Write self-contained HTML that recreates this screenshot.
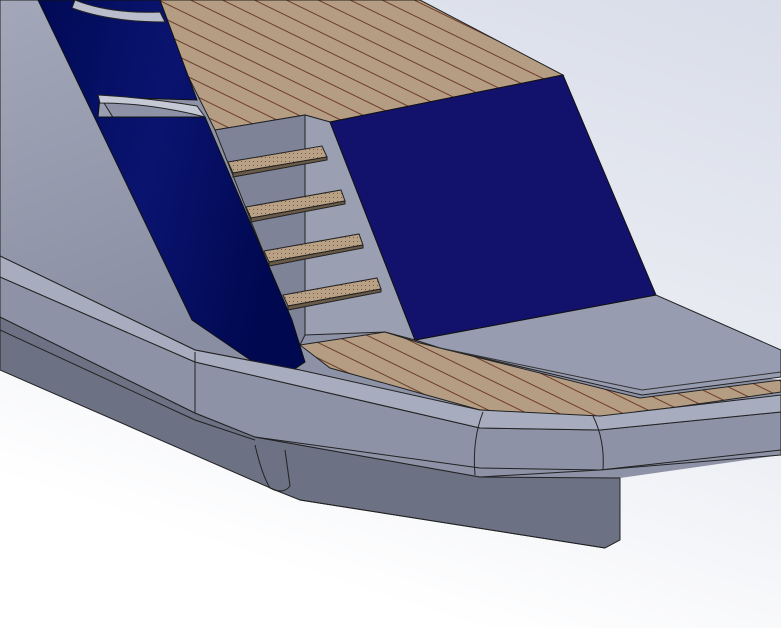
<!DOCTYPE html>
<html><head><meta charset="utf-8"><style>html,body{margin:0;padding:0;width:781px;height:628px;overflow:hidden;background:#fff}</style></head>
<body>
<svg width="781" height="628" viewBox="0 0 781 628" xmlns="http://www.w3.org/2000/svg">
<defs>
<linearGradient id="bg" x1="1" y1="0" x2="0.6" y2="1">
<stop offset="0" stop-color="#d9dde9"/><stop offset="0.6" stop-color="#eceef4"/><stop offset="1" stop-color="#ffffff"/>
</linearGradient>
<linearGradient id="side" x1="0" y1="0" x2="0.3" y2="1">
<stop offset="0" stop-color="#a2a7b9"/><stop offset="1" stop-color="#898ea2"/>
</linearGradient>
<pattern id="wood" patternUnits="userSpaceOnUse" width="14" height="14" patternTransform="rotate(26)">
<rect width="14" height="14" fill="#b49d83"/><rect y="0" width="14" height="1" fill="#6e3c2a"/>
</pattern>
<pattern id="tread" patternUnits="userSpaceOnUse" width="4" height="4">
<rect width="4" height="4" fill="#b8a185"/><rect x="1" y="1" width="1" height="1" fill="#7a5a45"/>
</pattern>
<linearGradient id="blue" x1="0" y1="0" x2="1" y2="0.3">
<stop offset="0" stop-color="#000a55"/><stop offset="0.5" stop-color="#0a1470"/><stop offset="1" stop-color="#000850"/>
</linearGradient>
</defs>
<rect width="781" height="628" fill="url(#bg)"/>
<polygon points="0,0 150,0 305,110 420,340 781,380 781,455 620,478 620,540 300,500 0,370" fill="#8d92a6"/>
<!-- upper deck wood -->
<polygon points="150,0 420,0 563,75 330,122 305,115 215,130 200,100" fill="url(#wood)" stroke="#222" stroke-width="1"/>
<!-- lower hull -->
<polygon points="0,317 195,413 255,437 480,477 620,478 620,540 605,548 300,500 275,490 0,370" fill="#6c7184" stroke="#222" stroke-width="1"/>
<!-- stairwell walls -->
<polygon points="215,130 305,115 305,335 300,345" fill="#7e8397" stroke="#222"/>
<polygon points="305,115 330,122 415,340 385,332 305,335" fill="#9a9fb2" stroke="#222"/>
<!-- steps -->
<g stroke="#222" stroke-width="1">
<polygon points="228,162 322,146 327,157 233,173" fill="url(#tread)"/>
<polygon points="233,173 327,157 327,160 233,177" fill="#6a5a48"/>
<polygon points="246,207 341,190 345,201 251,218" fill="url(#tread)"/>
<polygon points="251,218 345,201 345,204 251,222" fill="#6a5a48"/>
<polygon points="264,251 359,234 363,245 269,262" fill="url(#tread)"/>
<polygon points="269,262 363,245 363,248 269,266" fill="#6a5a48"/>
<polygon points="283,295 377,278 381,289 288,306" fill="url(#tread)"/>
<polygon points="288,306 381,289 381,292 288,310" fill="#6a5a48"/>
</g>
<!-- lower deck wood -->
<polygon points="300,345 385,332 420,343 640,398 781,380 781,392 600,418 480,410 330,368" fill="url(#wood)" stroke="#222"/>
<!-- seat cushion -->
<polygon points="415,340 656,295 781,350 781,377 642,395 440,348" fill="#979cb0" stroke="#222"/>
<polyline points="440,348 642,390 781,372" fill="none" stroke="#333"/>
<!-- right blue panel -->
<polygon points="330,122 563,75 656,295 415,340" fill="#12126c" stroke="#111"/>
<!-- left side panel -->
<polygon points="0,0 40,0 265,362 300,370 195,350 0,256" fill="url(#side)" stroke="#222"/>
<!-- blue column -->
<polygon points="38,0 160,0 197,100 100,97 98,117 205,117 292,320 305,362 290,372 262,368 192,320" fill="url(#blue)" stroke="#111"/>
<path d="M75,0 Q110,14 160,12 L165,22 Q110,22 72,8 Z" fill="#b9bdcc" stroke="#222"/>
<path d="M98,95 L100,103 Q150,103 205,117 L197,106 Q150,98 98,95 Z" fill="#c5c8d5" stroke="#222"/>
<!-- gunwale front face -->
<polygon points="0,277 195,362 480,428 600,430 781,412 781,455 600,470 480,477 255,437 195,413 0,317" fill="#8d92a6" stroke="#222"/>
<!-- gunwale top -->
<polygon points="0,256 195,350 300,370 480,410 600,416 781,395 781,412 600,430 480,428 195,362 0,277" fill="#a7acbf" stroke="#222"/>
<g fill="none" stroke="#222" stroke-width="1">
<polyline points="0,330 195,420 255,440"/>
<polyline points="255,437 480,468 600,470 781,450"/>
<line x1="195" y1="352" x2="195" y2="413"/>
<path d="M483,412 Q472,440 475,475"/>
<path d="M593,416 Q605,440 603,470"/>
<path d="M255,445 Q262,475 270,488 Q283,495 290,486 L285,450"/>
<polyline points="300,500 605,548"/>
</g>
</svg>
</body></html>
